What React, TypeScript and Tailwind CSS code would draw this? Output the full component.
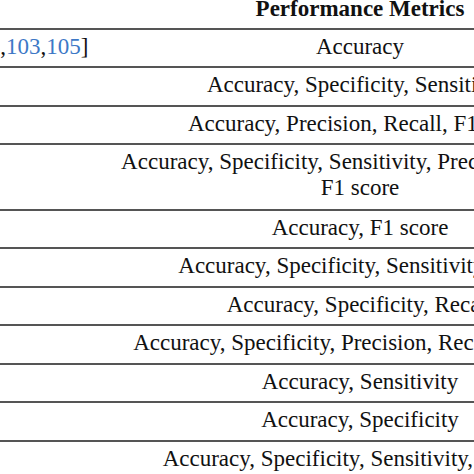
import React from "react";

const rows: { left?: React.ReactNode; right: React.ReactNode; tall?: boolean }[] = [
  {
    left: (
      <>
        [101,<span className="text-[#3d78c6]">103</span>,<span className="text-[#3d78c6]">105</span>]
      </>
    ),
    right: "Accuracy",
  },
  { right: "Accuracy, Specificity, Sensitivity" },
  { right: "Accuracy, Precision, Recall, F1 score" },
  {
    right: (
      <>
        Accuracy, Specificity, Sensitivity, Precision, Recall,
        <br />
        F1 score
      </>
    ),
    tall: true,
  },
  { right: "Accuracy, F1 score" },
  { right: "Accuracy, Specificity, Sensitivity, AUC" },
  { right: "Accuracy, Specificity, Recall" },
  { right: "Accuracy, Specificity, Precision, Recall, F1 score" },
  { right: "Accuracy, Sensitivity" },
  { right: "Accuracy, Specificity" },
  { right: "Accuracy, Specificity, Sensitivity, F1 score" },
];

export default function App() {
  return (
    <div
      className="w-[474px] h-[474px] overflow-hidden bg-white text-[#111111]"
      style={{ fontFamily: '"Liberation Serif", "Times New Roman", serif' }}
    >
      <div className="ml-[-42px] mt-[-8px] w-[652px] text-[23px] leading-[25.5px]">
        <div className="flex border-b-2 border-[#555555] pt-[4px] pb-[6px]">
          <div className="w-[152px] shrink-0" />
          <div className="w-[500px] shrink-0 text-center font-bold">Performance Metrics</div>
        </div>
        {rows.map((r, i) => (
          <div
            key={i}
            className={
              r.tall
                ? "flex border-b-2 border-[#555555] pt-[4px] pb-[8.5px]"
                : "flex border-b-2 border-[#555555] pt-[4px] pb-[7px]"
            }
          >
            <div className="w-[152px] shrink-0 whitespace-nowrap">{r.left}</div>
            <div className="w-[500px] shrink-0 text-center whitespace-nowrap">{r.right}</div>
          </div>
        ))}
      </div>
    </div>
  );
}
